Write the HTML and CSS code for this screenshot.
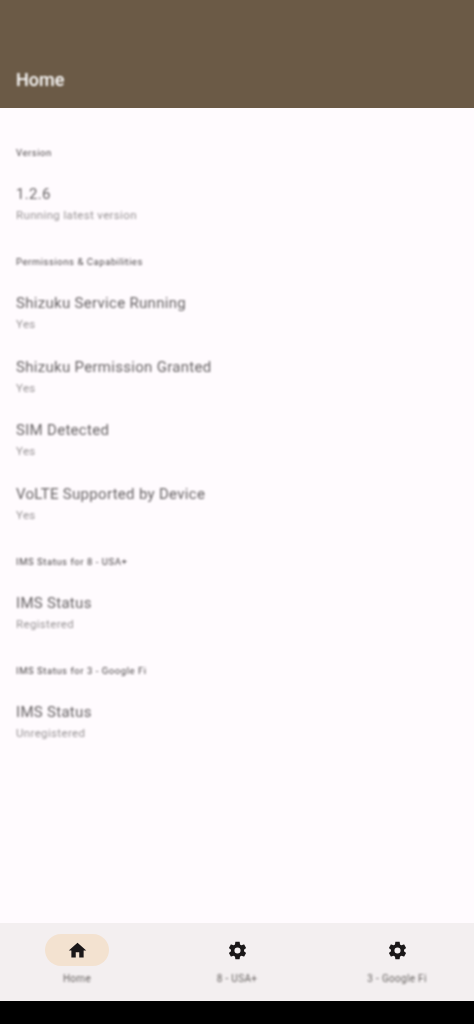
FILE: index.html
```html
<!DOCTYPE html>
<html lang="en">
<head>
<meta charset="utf-8">
<title>Home</title>
<link rel="stylesheet" href="styles.css">
</head>
<body>
<div class="app">
  <header class="appbar"><h1 class="appbar-title">Home</h1></header>
  <main class="content">
    <section class="group">
      <h2 class="group-title">Version</h2>
      <div class="item"><div class="item-title">1.2.6</div><div class="item-sub">Running latest version</div></div>
    </section>
    <section class="group">
      <h2 class="group-title">Permissions &amp; Capabilities</h2>
      <div class="item"><div class="item-title">Shizuku Service Running</div><div class="item-sub">Yes</div></div>
      <div class="item"><div class="item-title">Shizuku Permission Granted</div><div class="item-sub">Yes</div></div>
      <div class="item"><div class="item-title">SIM Detected</div><div class="item-sub">Yes</div></div>
      <div class="item"><div class="item-title">VoLTE Supported by Device</div><div class="item-sub">Yes</div></div>
    </section>
    <section class="group">
      <h2 class="group-title">IMS Status for 8 - USA+</h2>
      <div class="item"><div class="item-title">IMS Status</div><div class="item-sub">Registered</div></div>
    </section>
    <section class="group">
      <h2 class="group-title">IMS Status for 3 - Google Fi</h2>
      <div class="item"><div class="item-title">IMS Status</div><div class="item-sub">Unregistered</div></div>
    </section>
  </main>
  <nav class="navbar">
    <div class="nav-item">
      <div class="nav-icon nav-icon-active">
        <svg viewBox="0 0 24 24" width="24" height="24"><path d="M10 20v-6h4v6h5v-8h3L12 3 2 12h3v8z"/></svg>
      </div>
      <div class="nav-label">Home</div>
    </div>
    <div class="nav-item">
      <div class="nav-icon">
        <svg viewBox="0 0 24 24" width="24" height="24"><path fill-rule="evenodd" d="M19.43 12.98c.04-.32.07-.64.07-.98s-.03-.66-.07-.98l2.11-1.65c.19-.15.24-.42.12-.64l-2-3.46c-.12-.22-.39-.3-.61-.22l-2.49 1c-.52-.4-1.08-.73-1.69-.98l-.38-2.65C14.46 2.18 14.25 2 14 2h-4c-.25 0-.46.18-.49.42l-.38 2.65c-.61.25-1.17.59-1.69.98l-2.49-1c-.23-.09-.49 0-.61.22l-2 3.46c-.13.22-.07.49.12.64l2.11 1.65c-.04.32-.07.65-.07.98s.03.66.07.98l-2.11 1.65c-.19.15-.24.42-.12.64l2 3.46c.12.22.39.3.61.22l2.49-1c.52.4 1.08.73 1.69.98l.38 2.65c.03.24.24.42.49.42h4c.25 0 .46-.18.49-.42l.38-2.65c.61-.25 1.17-.59 1.69-.98l2.49 1c.23.09.49 0 .61-.22l2-3.46c.12-.22.07-.49-.12-.64l-2.11-1.65zM12 15.5a3.5 3.5 0 1 1 0-7 3.5 3.5 0 0 1 0 7z"/></svg>
      </div>
      <div class="nav-label">8 - USA+</div>
    </div>
    <div class="nav-item">
      <div class="nav-icon">
        <svg viewBox="0 0 24 24" width="24" height="24"><path fill-rule="evenodd" d="M19.43 12.98c.04-.32.07-.64.07-.98s-.03-.66-.07-.98l2.11-1.65c.19-.15.24-.42.12-.64l-2-3.46c-.12-.22-.39-.3-.61-.22l-2.49 1c-.52-.4-1.08-.73-1.69-.98l-.38-2.65C14.46 2.18 14.25 2 14 2h-4c-.25 0-.46.18-.49.42l-.38 2.65c-.61.25-1.17.59-1.69.98l-2.49-1c-.23-.09-.49 0-.61.22l-2 3.46c-.13.22-.07.49.12.64l2.11 1.65c-.04.32-.07.65-.07.98s.03.66.07.98l-2.11 1.65c-.19.15-.24.42-.12.64l2 3.46c.12.22.39.3.61.22l2.49-1c.52.4 1.08.73 1.69.98l.38 2.65c.03.24.24.42.49.42h4c.25 0 .46-.18.49-.42l.38-2.65c.61-.25 1.17-.59 1.69-.98l2.49 1c.23.09.49 0 .61-.22l2-3.46c.12-.22.07-.49-.12-.64l-2.11-1.65zM12 15.5a3.5 3.5 0 1 1 0-7 3.5 3.5 0 0 1 0 7z"/></svg>
      </div>
      <div class="nav-label">3 - Google Fi</div>
    </div>
  </nav>
  <div class="system-bar"></div>
</div>
</body>
</html>
```
FILE: styles.css
```css
* { box-sizing: border-box; margin: 0; padding: 0; }
html, body { width: 474px; height: 1024px; overflow: hidden; background: #000; }
body { font-family: Roboto, "Liberation Sans", sans-serif; }
.app { display: flex; flex-direction: column; width: 474px; height: 1024px; background: #fffbfe; }
.appbar { flex: none; height: 108px; background: #6b5a46; display: flex; align-items: flex-end; padding: 0 16px 15px; }
.appbar-title { font-size: 18px; line-height: 26px; font-weight: 500; color: #fff; filter: blur(1px); }
.content { flex: 1; padding-top: 24px; display: flex; flex-direction: column; gap: 18px; }
.group { display: flex; flex-direction: column; }
.group-title { font-size: 9.5px; line-height: 42px; height: 51px; font-weight: 400; letter-spacing: 0.55px; color: #4a4648; padding: 0 16px; filter: blur(0.9px); }
.item { height: 63.67px; padding: 0 16px; display: flex; flex-direction: column; filter: blur(1px); }
.item:last-child { height: 40px; }
.item-title { font-size: 15px; line-height: 22px; letter-spacing: 0.3px; color: #666264; }
.item-sub { margin-top: -1px; font-size: 11.5px; line-height: 22px; letter-spacing: 0.35px; color: #979395; }
.navbar { flex: none; height: 78px; background: #f3eff0; display: grid; grid-template-columns: repeat(3, 160px); justify-content: center; padding-top: 11px; }
.nav-item { display: flex; flex-direction: column; align-items: center; }
.nav-icon { width: 64px; height: 32px; display: flex; align-items: center; justify-content: center; border-radius: 16px; }
.nav-icon svg { fill: #1a1718; width: 21px; height: 21px; filter: blur(0.7px); }
.nav-icon-active { background: #f3e2d0; }
.nav-label { margin-top: 6px; font-size: 10px; line-height: 14px; letter-spacing: 0.3px; color: #686462; filter: blur(1px); }
.system-bar { flex: none; height: 23px; background: #000; }
```
